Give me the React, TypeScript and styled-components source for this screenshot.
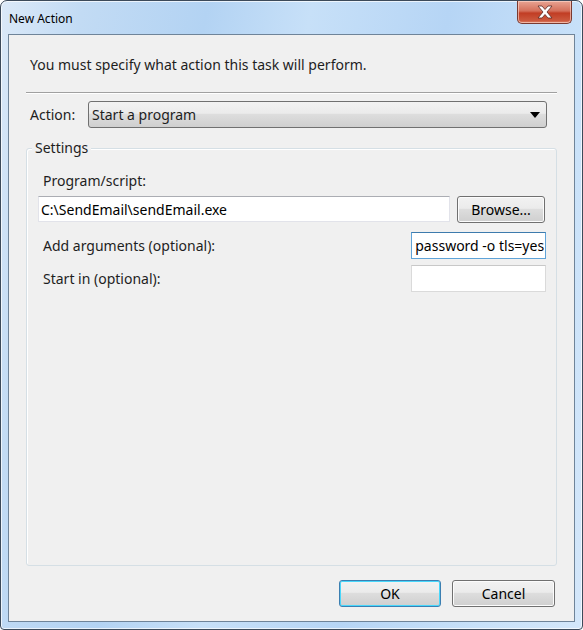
import { useEffect, useRef } from "react";
import styled, { createGlobalStyle } from "styled-components";

const GlobalStyle = createGlobalStyle`
  html, body {
    margin: 0;
    padding: 0;
    background: #ffffff;
  }
  body {
    font-family: "Noto Sans", "Open Sans", sans-serif;
    font-size: 14px;
    color: #1e1e1e;
  }
`;

const ARGUMENTS = "-f me@example.com -t you@example.com -xp password -o tls=yes";

const App: React.FC = () => {
  const argsRef = useRef<HTMLInputElement>(null);

  // the field scrolls to its end, as the focused box in the dialog does
  useEffect(() => {
    if (argsRef.current) {
      argsRef.current.scrollLeft = argsRef.current.scrollWidth;
    }
  }, []);

  return (
    <>
      <GlobalStyle />
      <StyledWindow>
        <StyledTitleBar>
          <StyledTitle>New Action</StyledTitle>
          <StyledCloseButton>
            <svg width="20" height="14" viewBox="0 0 20 14">
              <path
                d="M3 1 L7 1 L10 4.5 L13 1 L17 1 L12 7 L17 13 L13 13 L10 9.5 L7 13 L3 13 L8 7 Z"
                fill="#ffffff"
                stroke="#5a2a24"
                strokeWidth="0.8"
                strokeLinejoin="round"
              />
            </svg>
          </StyledCloseButton>
        </StyledTitleBar>
        <StyledClient>
          <StyledIntro>You must specify what action this task will perform.</StyledIntro>
          <StyledSeparator />
          <StyledActionRow>
            <StyledLabel>Action:</StyledLabel>
            <StyledSelect>
              <span>Start a program</span>
              <svg width="10" height="6" viewBox="0 0 10 6">
                <path d="M0 0 L10 0 L5 6 Z" fill="#000" />
              </svg>
            </StyledSelect>
          </StyledActionRow>
          <StyledGroup>
            <StyledLegend>Settings</StyledLegend>
            <StyledFieldLabel>Program/script:</StyledFieldLabel>
            <StyledProgramRow>
              <StyledTextBox $width={412}>C:\SendEmail\sendEmail.exe</StyledTextBox>
              <StyledButton $width={88}>Browse...</StyledButton>
            </StyledProgramRow>
            <StyledFieldRow $gap={9}>
              <StyledFieldLabel>Add arguments (optional):</StyledFieldLabel>
              <StyledInput ref={argsRef} readOnly value={ARGUMENTS} $focused />
            </StyledFieldRow>
            <StyledFieldRow $gap={6}>
              <StyledFieldLabel>Start in (optional):</StyledFieldLabel>
              <StyledInput readOnly value="" />
            </StyledFieldRow>
          </StyledGroup>
          <StyledFooter>
            <StyledButton $width={102} $default>
              OK
            </StyledButton>
            <StyledButton $width={103}>Cancel</StyledButton>
          </StyledFooter>
        </StyledClient>
      </StyledWindow>
    </>
  );
};

export default App;

const StyledWindow = styled.div`
  width: 583px;
  height: 630px;
  box-sizing: border-box;
  display: flex;
  flex-direction: column;
  border: 1px solid #3c4a5a;
  border-radius: 7px 7px 4px 4px;
  padding: 0 7px 7px;
  background: linear-gradient(
    100deg,
    #dbe9f8 0%,
    #c2dbf4 12%,
    #b3d3f3 30%,
    #c7e0f8 45%,
    #b6d5f5 65%,
    #c8e1f9 85%,
    #d4e7fa 100%
  );
  box-shadow: inset 0 0 0 1px rgba(255, 255, 255, 0.7);
`;

const StyledTitleBar = styled.div`
  height: 33px;
  flex-shrink: 0;
  display: flex;
  align-items: flex-start;
  justify-content: space-between;
`;

const StyledTitle = styled.div`
  font-size: 12px;
  color: #000;
  padding: 9px 0 0 1px;
`;

const StyledCloseButton = styled.div`
  width: 55px;
  height: 23px;
  margin-right: 3px;
  box-sizing: border-box;
  display: flex;
  align-items: center;
  justify-content: center;
  border: 1px solid #7a3a30;
  border-top: none;
  border-radius: 0 0 5px 5px;
  background: linear-gradient(#e8a493 0%, #d4705b 45%, #c13d24 55%, #cc5a3f 90%, #e08a70 100%);
  box-shadow: inset 0 0 0 1px rgba(255, 220, 210, 0.6);
`;

const StyledClient = styled.div`
  flex: 1;
  display: flex;
  flex-direction: column;
  background: #f0f0f0;
  border: 1px solid #6f8499;
  padding: 0 17px 0 17px;
`;

const StyledIntro = styled.div`
  font-size: 14px;
  padding: 19px 0 0 4px;
  height: 21px;
  line-height: 21px;
`;

const StyledSeparator = styled.div`
  height: 0;
  margin: 17px 0 0 0;
  border-top: 1px solid #a0a0a0;
  border-bottom: 1px solid #ffffff;
`;

const StyledActionRow = styled.div`
  display: flex;
  align-items: center;
  margin-top: 7px;
  padding-left: 4px;
  margin-right: 10px;
`;

const StyledLabel = styled.div`
  width: 58px;
  flex-shrink: 0;
`;

const StyledSelect = styled.div`
  flex: 1;
  height: 27px;
  box-sizing: border-box;
  display: flex;
  align-items: center;
  justify-content: space-between;
  padding: 0 6px 0 3px;
  border: 1px solid #707070;
  border-radius: 3px;
  background: linear-gradient(#f2f2f2 0%, #ebebeb 45%, #dddddd 50%, #cfcfcf 100%);
`;

const StyledGroup = styled.div`
  position: relative;
  height: 418px;
  margin: 20px 0 0 0;
  box-sizing: border-box;
  border: 1px solid #d5dfe5;
  border-radius: 3px;
  padding: 22px 11px 0 11px;
  box-shadow: inset 1px 1px 0 #ffffff;
`;

const StyledLegend = styled.div`
  position: absolute;
  top: -11px;
  left: 5px;
  padding: 0 3px;
  background: #f0f0f0;
`;

const StyledFieldLabel = styled.div`
  padding-left: 5px;
  flex: 1;
`;

const StyledProgramRow = styled.div`
  display: flex;
  align-items: flex-start;
  gap: 7px;
  margin-top: 6px;
`;

const StyledFieldRow = styled.div<{ $gap: number }>`
  display: flex;
  align-items: center;
  margin-top: ${(p) => p.$gap}px;
  margin-right: -1px;
`;

const StyledTextBox = styled.div<{ $width: number }>`
  width: ${(p) => p.$width}px;
  height: 26px;
  box-sizing: border-box;
  flex-shrink: 0;
  display: flex;
  align-items: center;
  white-space: nowrap;
  padding: 0 2px;
  background: #ffffff;
  border: 1px solid #e2e3ea;
  border-top-color: #abadb3;
  color: #000;
  font-size: 14px;
`;

const StyledInput = styled.input<{ $focused?: boolean }>`
  width: 135px;
  height: 27px;
  box-sizing: border-box;
  flex-shrink: 0;
  margin: 0;
  padding: 0 1px;
  outline: none;
  background: #ffffff;
  border: 1px solid ${(p) => (p.$focused ? "#5fa3d8" : "#dadada")};
  border-top-color: ${(p) => (p.$focused ? "#3d7bad" : "#c8c8c8")};
  border-radius: 0;
  color: #000;
  font-family: "Noto Sans", "Open Sans", sans-serif;
  font-size: 14px;
  caret-color: #000;
`;

const StyledButton = styled.div<{ $width: number; $default?: boolean }>`
  width: ${(p) => p.$width}px;
  height: 27px;
  box-sizing: border-box;
  display: flex;
  align-items: center;
  justify-content: center;
  border: 1px solid ${(p) => (p.$default ? "#3c7fb1" : "#707070")};
  border-radius: 3px;
  background: linear-gradient(#f2f2f2 0%, #ebebeb 45%, #dddddd 50%, #cfcfcf 100%);
  box-shadow: inset 0 0 0 1px ${(p) => (p.$default ? "#48d7fb" : "#fcfcfc")};
  color: #000;
  font-size: 14px;
  flex-shrink: 0;
`;

const StyledFooter = styled.div`
  display: flex;
  justify-content: flex-end;
  gap: 11px;
  margin-top: 14px;
  margin-right: 2px;
`;
